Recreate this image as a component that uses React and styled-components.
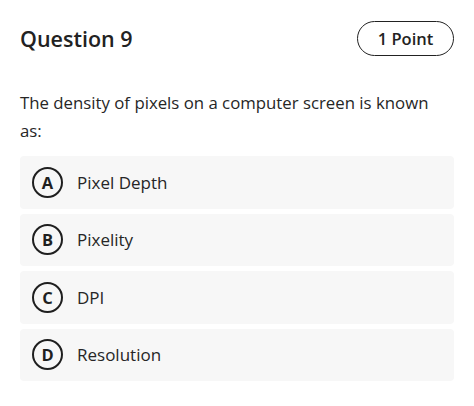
import React from 'react'
import styled, { createGlobalStyle } from 'styled-components';

const options = [
  { key: 'A', label: 'Pixel Depth' },
  { key: 'B', label: 'Pixelity' },
  { key: 'C', label: 'DPI' },
  { key: 'D', label: 'Resolution' },
];

const App = () => {
  return (
    <>
      <GlobalStyle />
      <Container>
        <Header>
          <Title>Question 9</Title>
          <Points>1 Point</Points>
        </Header>
        <Prompt>The density of pixels on a computer screen is known as:</Prompt>
        <Options>
          {options.map((o) => (
            <Option key={o.key}>
              <Letter>{o.key}</Letter>
              <Label>{o.label}</Label>
            </Option>
          ))}
        </Options>
      </Container>
    </>
  )
}

export default App

const GlobalStyle = createGlobalStyle`
  body {
    margin: 0;
    background: #ffffff;
    font-family: "Open Sans", "Noto Sans", sans-serif;
    color: #222;
  }
`;

const Container = styled.div`
  width: 474px;
  padding: 21px 20px 0 20px;
  box-sizing: border-box;
`;

const Header = styled.div`
  display: flex;
  align-items: center;
  justify-content: space-between;
`;

const Title = styled.h2`
  margin: 0;
  font-size: 21.5px;
  font-weight: 600;
  color: #222;
`;

const Points = styled.div`
  width: 97px;
  height: 35px;
  box-sizing: border-box;
  border: 1.5px solid #222;
  border-radius: 18px;
  display: flex;
  align-items: center;
  justify-content: center;
  font-size: 16.5px;
  font-weight: 600;
  color: #222;
`;

const Prompt = styled.p`
  margin: 33px 0 0 0;
  font-size: 16.8px;
  line-height: 28px;
  color: #262626;
`;

const Options = styled.div`
  margin-top: 11px;
  display: flex;
  flex-direction: column;
  gap: 5px;
`;

const Option = styled.div`
  height: 52.5px;
  background: #f7f7f7;
  border-radius: 4px;
  display: flex;
  align-items: center;
  padding-left: 12px;
  gap: 14px;
`;

const Letter = styled.span`
  width: 31px;
  height: 31px;
  box-sizing: border-box;
  border: 2px solid #1f1f1f;
  border-radius: 50%;
  display: flex;
  align-items: center;
  justify-content: center;
  font-size: 16.5px;
  font-weight: 700;
  color: #1f1f1f;
`;

const Label = styled.span`
  font-size: 17px;
  color: #262626;
`;
